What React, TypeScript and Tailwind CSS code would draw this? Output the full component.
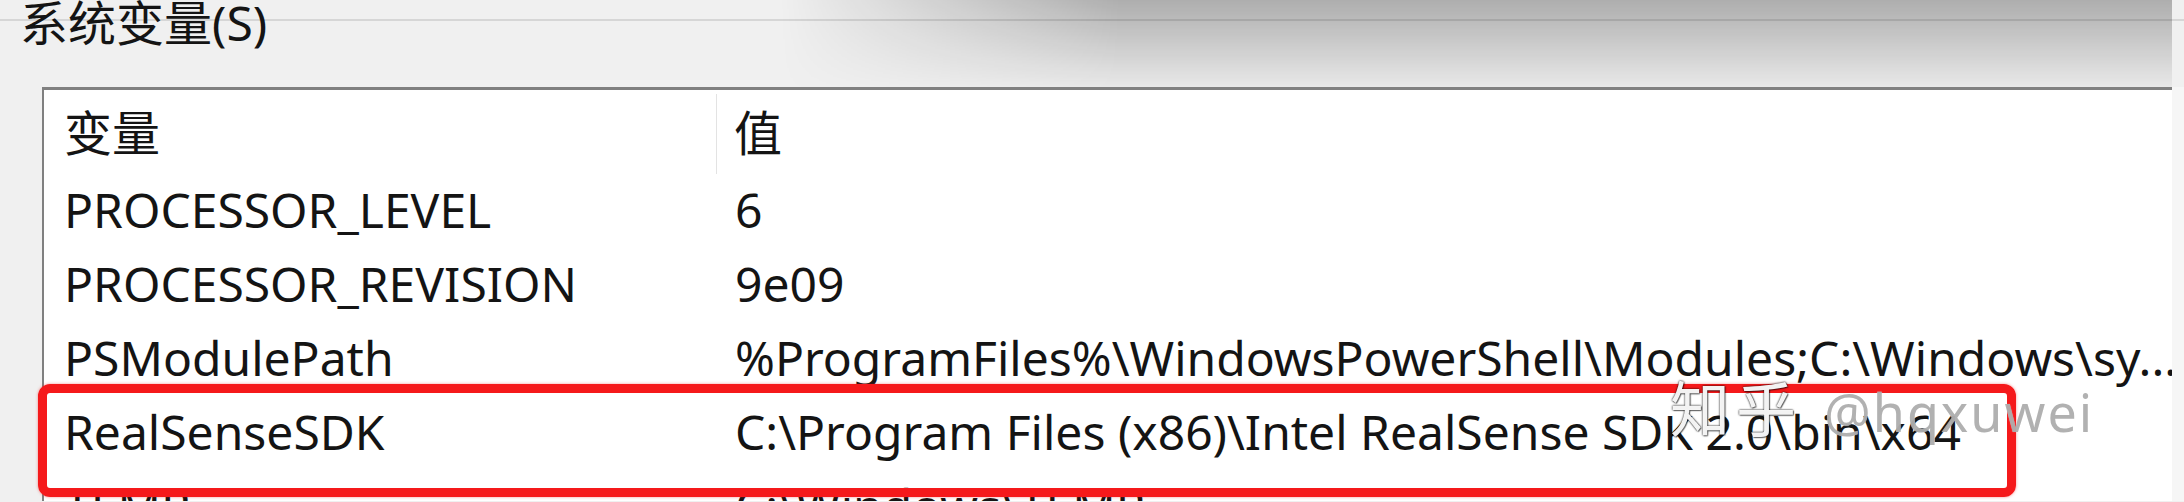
import React from "react";

const rows: [string, string][] = [
  ["PROCESSOR_LEVEL", "6"],
  ["PROCESSOR_REVISION", "9e09"],
  ["PSModulePath", "%ProgramFiles%\\WindowsPowerShell\\Modules;C:\\Windows\\sy..."],
  ["RealSenseSDK", "C:\\Program Files (x86)\\Intel RealSense SDK 2.0\\bin\\x64"],
  ["TEMP", "C:\\Windows\\TEMP"],
];

export default function App() {
  return (
    <div className="relative w-[2184px] h-[502px] overflow-hidden bg-[#f0f0f0] font-['Noto_Sans','Noto_Sans_CJK_SC',sans-serif] text-[48px] text-[#141414]">
      {/* top band with title */}
      <div className="relative h-[88px]">
        <div className="absolute left-0 right-0 top-[20px] h-[2px] bg-[#d6d6d6]" />
        <div className="absolute left-[780px] right-[12px] top-0 h-[88px] bg-[linear-gradient(to_bottom,rgba(0,0,0,0.28),rgba(0,0,0,0.03))] [mask-image:linear-gradient(to_right,transparent,black_340px)]" />
        <div className="relative pl-[20px] leading-[48px] -mt-[1px]">系统变量(S)</div>
      </div>

      {/* table */}
      <div className="flex">
        <div className="ml-[42px] w-[2130px] h-[414px] overflow-hidden border-l-[2px] border-t-[3px] border-[#808080] bg-white">
          <div className="grid grid-cols-[673px_1fr] h-[83px]">
            <div className="pl-[20px] pt-[6px] leading-[74px] border-r border-[#e3e3e3] mb-[4px] mt-[4px]">
              <span className="relative top-[-4px]">变量</span>
            </div>
            <div className="pl-[17px] pt-[6px] leading-[74px]">值</div>
          </div>
          {rows.map(([k, v]) => (
            <div key={k} className="grid grid-cols-[673px_1fr] h-[74px] leading-[74px] whitespace-nowrap">
              <div className="pl-[20px] overflow-hidden">{k}</div>
              <div className="pl-[18px] overflow-hidden">{v}</div>
            </div>
          ))}
        </div>
        <div className="flex-1 bg-[#f6f6f6]" />
      </div>

      {/* red annotation box */}
      <div className="absolute left-[38px] top-[384px] w-[1978px] h-[113px] border-[9px] border-[#f5191b] rounded-[12px] shadow-[0_0_3px_rgba(240,30,30,0.5)]" />

      {/* watermark */}
      <div className="absolute left-[1670px] top-[374px] leading-[70px] whitespace-nowrap">
        <span className="text-[60px] tracking-[6px] text-white/95 [text-shadow:0_0_2px_rgba(0,0,0,0.7),0_0_2px_rgba(0,0,0,0.6),1px_1px_1px_rgba(0,0,0,0.4)]">知乎</span>
        <span className="text-[52px] tracking-[2px] ml-[22px] text-[#a8a8a8]/90 [text-shadow:0_0_1px_rgba(255,255,255,0.6)]">@hqxuwei</span>
      </div>
    </div>
  );
}
